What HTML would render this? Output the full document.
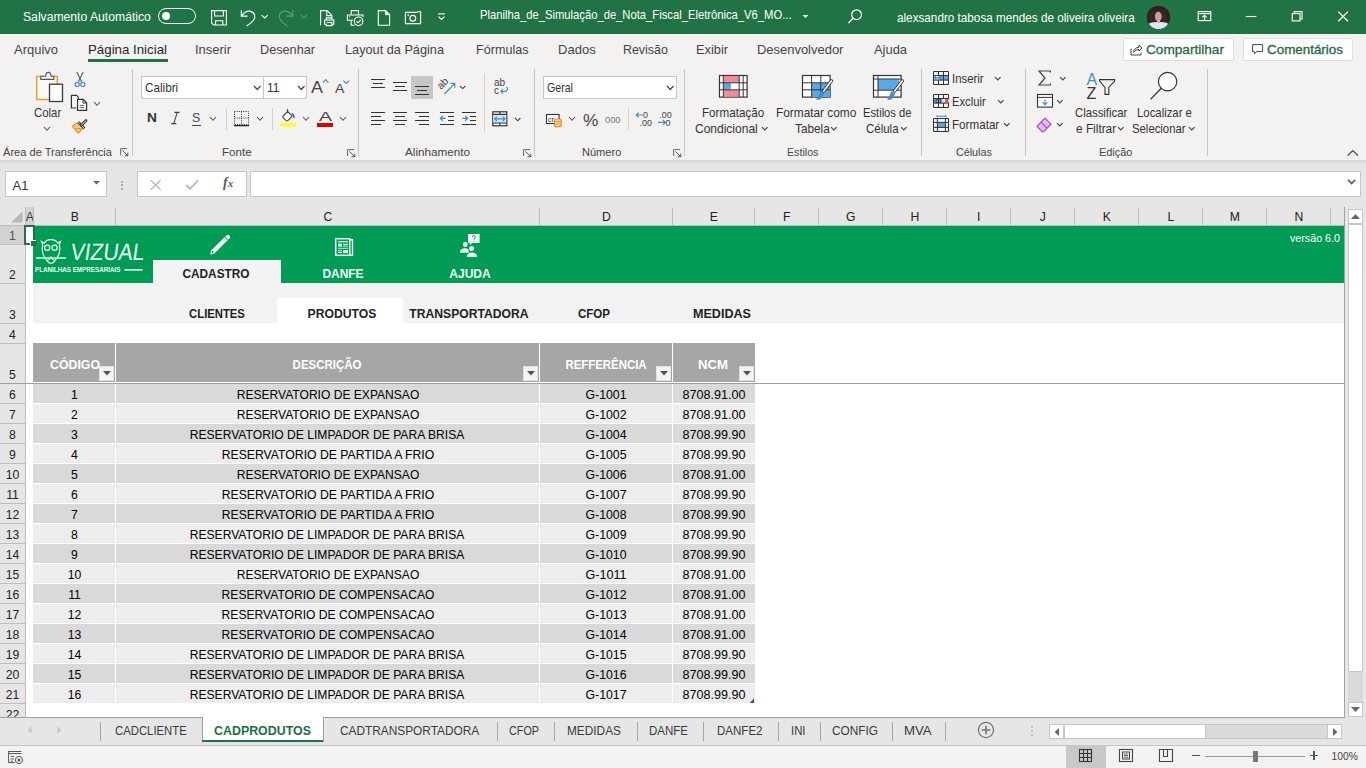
<!DOCTYPE html><html><head><meta charset="utf-8"><style>
*{box-sizing:border-box;margin:0;padding:0}
html,body{width:1366px;height:768px;overflow:hidden;background:#fff;font-family:"Liberation Sans", sans-serif;}
.ab{position:absolute}
.t{position:absolute;white-space:nowrap;line-height:1}
svg{position:absolute;overflow:visible}
</style></head><body>

<div class="ab" style="left:0px;top:0px;width:1366px;height:34px;background:#217346"></div>
<div class="t" style="left:23.00px;top:10.67px;font-size:12.2px;color:#fff;font-weight:400;transform:scaleX(0.9986);transform-origin:0 0;">Salvamento Automático</div>
<div class="ab" style="left:158px;top:8px;width:38px;height:16px;border:1.3px solid #fff;border-radius:8px"></div>
<div class="ab" style="left:162px;top:12px;width:8px;height:8px;background:#fff;border-radius:50%"></div>
<div class="t" style="left:480.30px;top:9.33px;font-size:12.6px;color:#fff;font-weight:400;transform:scaleX(0.8918);transform-origin:0 0;">Planilha_de_Simulação_de_Nota_Fiscal_Eletrônica_V6_MO...</div>
<div class="t" style="left:897.00px;top:11.67px;font-size:12.2px;color:#fff;font-weight:400;transform:scaleX(0.9614);transform-origin:0 0;">alexsandro tabosa mendes de oliveira oliveira</div>
<svg style="left:200px;top:0px;" width="40" height="34" viewBox="0 0 40 34"><path d="M11.6 10.6 H26.4 V25 H13.6 L11.6 23 Z" fill="none" stroke="#fff" stroke-width="1.1"/><path d="M14.6 10.6 V16 H23.4 V10.6" fill="none" stroke="#fff" stroke-width="1.1"/><path d="M15.6 25 V20.8 H22.8 V25" fill="none" stroke="#fff" stroke-width="1.1"/></svg>
<svg style="left:236px;top:0px;" width="40" height="34" viewBox="0 0 40 34"><path d="M5.3 10.3 V16.1 H11.5" fill="none" stroke="#fff" stroke-width="1.1"/><path d="M5.6 15.8 Q9.5 10.6 13.8 11.2 Q19.6 12.5 18.6 18.2 Q17.6 21.6 10.6 26" fill="none" stroke="#fff" stroke-width="1.2"/><path d="M25.6 15.2 L28.7 18 L31.8 15.2" fill="none" stroke="#fff" stroke-width="1.1"/></svg>
<svg style="left:276px;top:0px;" width="40" height="34" viewBox="0 0 40 34"><path d="M16.8 10.3 V16.1 H10.6" fill="none" stroke="#5f9e7c" stroke-width="1.1"/><path d="M16.5 15.8 Q12.6 10.6 8.3 11.2 Q2.5 12.5 3.5 18.2 Q4.5 21.6 11.5 26" fill="none" stroke="#5f9e7c" stroke-width="1.2"/><path d="M24.8 15.2 L27.9 18 L31 15.2" fill="none" stroke="#5f9e7c" stroke-width="1.1"/></svg>
<svg style="left:316px;top:0px;" width="24" height="34" viewBox="0 0 24 34"><path d="M4.6 25.2 V10.6 H11.2 L15.8 15.4 V17.6" fill="none" stroke="#fff" stroke-width="1.1"/><path d="M10.8 10.6 V15.6 H15.8" fill="none" stroke="#fff" stroke-width="1.1"/><path d="M10.3 17.9 H16 V20 H17.8 V24.3 H16 V25.6 H10.3 V24.3 H8.6 V20 H10.3 Z" fill="none" stroke="#fff" stroke-width="1.1"/><path d="M10.3 20 H16" fill="none" stroke="#fff" stroke-width="1.1"/><path d="M10.6 22.5 H15.8 V25.3" fill="none" stroke="#fff" stroke-width="1.1"/></svg>
<svg style="left:344px;top:0px;" width="24" height="34" viewBox="0 0 24 34"><path d="M7.2 14.8 V10.6 H14.5 V14.8" fill="none" stroke="#fff" stroke-width="1.1"/><path d="M9 20.3 H3.4 V15 H19 V17" fill="none" stroke="#fff" stroke-width="1.1"/><path d="M7.2 20.3 V25.3 H10.5" fill="none" stroke="#fff" stroke-width="1.1"/><circle cx="14.6" cy="21.3" r="4.3" fill="none" stroke="#fff" stroke-width="1.1"/><path d="M12.5 21.4 L14 22.8 L16.8 20" fill="none" stroke="#fff" stroke-width="1.1"/><rect x="4.9" y="16.3" width="1" height="1" fill="#fff"/></svg>
<svg style="left:374px;top:0px;" width="20" height="34" viewBox="0 0 20 34"><path d="M4.3 10.6 H11.6 L15.6 14.6 V25.2 H4.3 Z" fill="none" stroke="#fff" stroke-width="1.1"/><path d="M11.4 10.8 V14.8 H15.4" fill="#fff" stroke="#fff" stroke-width="0.6"/></svg>
<svg style="left:402px;top:0px;" width="24" height="34" viewBox="0 0 24 34"><path d="M3.4 12.4 H14.8 L15.6 11.8 H18.6 V23.6 H3.4 Z" fill="none" stroke="#fff" stroke-width="1.1"/><circle cx="10.8" cy="18.2" r="2.9" fill="none" stroke="#fff" stroke-width="1.2"/><rect x="5.5" y="14.3" width="1.4" height="1.4" fill="#fff"/></svg>
<svg style="left:434px;top:0px;" width="16" height="34" viewBox="0 0 16 34"><path d="M4 13.9 H11" stroke="#fff" stroke-width="1.1"/><path d="M4.5 16.6 L7.5 19.4 L10.5 16.6" fill="none" stroke="#fff" stroke-width="1.2"/></svg>
<svg style="left:800px;top:0px;" width="14" height="34" viewBox="0 0 14 34"><path d="M2.5 15 H8.5 L5.5 18Z" fill="#fff"/></svg>
<svg style="left:844px;top:0px;" width="22" height="34" viewBox="0 0 22 34"><circle cx="12.6" cy="14.7" r="4.9" fill="none" stroke="#fff" stroke-width="1.2"/><path d="M9.1 18.3 L4.4 23" fill="none" stroke="#fff" stroke-width="1.3"/></svg>
<div class="ab" style="left:1147px;top:6px;width:23px;height:23px;border-radius:50%;overflow:hidden;background:#2b2020"><svg width="23" height="23" style="left:0;top:0"><rect width="23" height="23" fill="#2e2222"/><path d="M3 10 Q5 3 11.5 3 Q18 3 20 10 V16 H3Z" fill="#3a2626"/><ellipse cx="11.3" cy="10.6" rx="3.4" ry="4.8" fill="#caa093"/><path d="M0 23 V19 Q3 16 9 16 H14 Q20 16 23 19 V23Z" fill="#e4e3ea"/><rect x="10" y="14" width="3" height="3" fill="#c9b6ae"/></svg></div>
<svg style="left:1194px;top:0px;" width="20" height="34" viewBox="0 0 20 34"><rect x="4.2" y="11.6" width="12.6" height="9" fill="none" stroke="#fff" stroke-width="1.1"/><path d="M4.2 13.6 H16.8" fill="none" stroke="#fff" stroke-width="1.1"/><path d="M8.3 17.3 L10.5 15.2 L12.7 17.3 M10.5 15.4 V20.4" fill="none" stroke="#fff" stroke-width="1.1"/></svg>
<svg style="left:1240px;top:0px;" width="20" height="34" viewBox="0 0 20 34"><path d="M5.7 16.5 H16.4" stroke="#fff" stroke-width="1.1"/></svg>
<svg style="left:1288px;top:0px;" width="20" height="34" viewBox="0 0 20 34"><rect x="4.2" y="13.6" width="7.8" height="7.3" fill="none" stroke="#fff" stroke-width="1.1"/><path d="M6.2 13.6 V11.6 H14 V19 H12" fill="none" stroke="#fff" stroke-width="1.1"/></svg>
<svg style="left:1334px;top:0px;" width="20" height="34" viewBox="0 0 20 34"><path d="M4.2 11.6 L14 21.2 M14 11.6 L4.2 21.2" fill="none" stroke="#fff" stroke-width="1.2"/></svg>
<div class="ab" style="left:0px;top:34px;width:1366px;height:126px;background:#f3f2f1"></div>
<div class="t" style="left:14.00px;top:43.00px;font-size:13px;color:#444;font-weight:400;transform:scaleX(0.9981);transform-origin:0 0;">Arquivo</div>
<div class="t" style="left:88.00px;top:43.00px;font-size:13px;color:#262626;font-weight:400;transform:scaleX(1.0217);transform-origin:0 0;">Página Inicial</div>
<div class="t" style="left:194.60px;top:43.00px;font-size:13px;color:#444;font-weight:400;transform:scaleX(0.9968);transform-origin:0 0;">Inserir</div>
<div class="t" style="left:260.00px;top:43.00px;font-size:13px;color:#444;font-weight:400;transform:scaleX(0.9757);transform-origin:0 0;">Desenhar</div>
<div class="t" style="left:345.00px;top:43.00px;font-size:13px;color:#444;font-weight:400;transform:scaleX(0.9782);transform-origin:0 0;">Layout da Página</div>
<div class="t" style="left:476.00px;top:43.00px;font-size:13px;color:#444;font-weight:400;transform:scaleX(0.9689);transform-origin:0 0;">Fórmulas</div>
<div class="t" style="left:557.80px;top:43.00px;font-size:13px;color:#444;font-weight:400;transform:scaleX(1.0031);transform-origin:0 0;">Dados</div>
<div class="t" style="left:622.80px;top:43.00px;font-size:13px;color:#444;font-weight:400;transform:scaleX(0.9538);transform-origin:0 0;">Revisão</div>
<div class="t" style="left:696.00px;top:43.00px;font-size:13px;color:#444;font-weight:400;transform:scaleX(0.9842);transform-origin:0 0;">Exibir</div>
<div class="t" style="left:757.00px;top:43.00px;font-size:13px;color:#444;font-weight:400;transform:scaleX(0.9964);transform-origin:0 0;">Desenvolvedor</div>
<div class="t" style="left:873.70px;top:43.00px;font-size:13px;color:#444;font-weight:400;transform:scaleX(0.9924);transform-origin:0 0;">Ajuda</div>
<div class="ab" style="left:88px;top:59px;width:80px;height:3px;background:#217346"></div>
<div class="ab" style="left:1123px;top:38px;width:111px;height:23px;background:#fff;border:1px solid #e1dfdd;border-radius:2px"></div>
<div class="ab" style="left:1243px;top:38px;width:110px;height:23px;background:#fff;border:1px solid #e1dfdd;border-radius:2px"></div>
<div class="t" style="left:1146.00px;top:42.66px;font-size:13.4px;color:#1d6b40;font-weight:400;transform:scaleX(1.0169);transform-origin:0 0;-webkit-text-stroke:0.3px #1d6b40;">Compartilhar</div>
<div class="t" style="left:1267.00px;top:42.66px;font-size:13.4px;color:#1d6b40;font-weight:400;transform:scaleX(1.0005);transform-origin:0 0;-webkit-text-stroke:0.3px #1d6b40;">Comentários</div>
<div class="ab" style="left:132px;top:69px;width:1px;height:87px;background:#c8c6c4"></div>
<div class="ab" style="left:358px;top:69px;width:1px;height:87px;background:#c8c6c4"></div>
<div class="ab" style="left:534px;top:69px;width:1px;height:87px;background:#c8c6c4"></div>
<div class="ab" style="left:684px;top:69px;width:1px;height:87px;background:#c8c6c4"></div>
<div class="ab" style="left:921px;top:69px;width:1px;height:87px;background:#c8c6c4"></div>
<div class="ab" style="left:1025px;top:69px;width:1px;height:87px;background:#c8c6c4"></div>
<div class="ab" style="left:1207px;top:69px;width:1px;height:87px;background:#c8c6c4"></div>
<div class="t" style="left:3.00px;top:146.71px;font-size:11.8px;color:#444;font-weight:400;transform:scaleX(0.9387);transform-origin:0 0;">Área de Transferência</div>
<div class="t" style="left:222.00px;top:146.71px;font-size:11.8px;color:#444;font-weight:400;transform:scaleX(0.9810);transform-origin:0 0;">Fonte</div>
<div class="t" style="left:405.00px;top:146.71px;font-size:11.8px;color:#444;font-weight:400;transform:scaleX(0.9909);transform-origin:0 0;">Alinhamento</div>
<div class="t" style="left:581.70px;top:146.71px;font-size:11.8px;color:#444;font-weight:400;transform:scaleX(0.9363);transform-origin:0 0;">Número</div>
<div class="t" style="left:786.60px;top:146.71px;font-size:11.8px;color:#444;font-weight:400;transform:scaleX(0.9036);transform-origin:0 0;">Estilos</div>
<div class="t" style="left:955.60px;top:146.71px;font-size:11.8px;color:#444;font-weight:400;transform:scaleX(0.9097);transform-origin:0 0;">Células</div>
<div class="t" style="left:1099.00px;top:146.71px;font-size:11.8px;color:#444;font-weight:400;transform:scaleX(0.9256);transform-origin:0 0;">Edição</div>
<svg style="left:30px;top:66px;" width="40" height="40" viewBox="0 0 40 40"><path d="M6.7 10.6 H27.3 V33.6 H6.7Z" fill="#fbfaf9" stroke="#e89d2c" stroke-width="1.5"/><path d="M10.8 13.4 V10.2 H15.6 Q15.8 6.4 18.3 6.4 Q20.8 6.4 21 10.2 H23.8 V13.4Z" fill="#fff" stroke="#555" stroke-width="1.1"/><rect x="19.5" y="18.2" width="13" height="17.3" fill="#fff" stroke="#3c3c3c" stroke-width="1.3"/></svg>
<div class="t" style="left:33.60px;top:106.87px;font-size:12.2px;color:#333;font-weight:400;transform:scaleX(0.9328);transform-origin:0 0;">Colar</div>
<svg style="left:42.8px;top:125.75px;" width="8" height="5.3" viewBox="0 0 8 5.3"><path d="M1 1 L4.0 4.3 L7 1" fill="none" stroke="#555" stroke-width="1.1"/></svg>
<svg style="left:70px;top:66px;" width="20" height="24" viewBox="0 0 20 24"><path d="M6.8 6 L11.6 15.8 M13.2 6 L8.4 15.8" stroke="#555" stroke-width="1.1"/><circle cx="7.2" cy="18.4" r="2.1" fill="none" stroke="#3f8fd0" stroke-width="1.2"/><circle cx="12.8" cy="18.4" r="2.1" fill="none" stroke="#3f8fd0" stroke-width="1.2"/></svg>
<svg style="left:68px;top:92px;" width="22" height="22" viewBox="0 0 22 22"><path d="M8.4 16 H3.4 V3.4 H8.6 L10.4 5.2 V6.6" fill="none" stroke="#333" stroke-width="1.2"/><path d="M9.6 7.4 H15.2 L18.6 10.8 V18.4 H9.6 Z" fill="#fff" stroke="#333" stroke-width="1.2"/><path d="M15 7.6 V11 H18.4" fill="none" stroke="#333" stroke-width="1"/><path d="M11.8 13.4 H16.2 M11.8 15.6 H16.2" stroke="#555" stroke-width="0.9"/></svg>
<svg style="left:92.6px;top:100.85px;" width="8" height="5.3" viewBox="0 0 8 5.3"><path d="M1 1 L4.0 4.3 L7 1" fill="none" stroke="#555" stroke-width="1.1"/></svg>
<svg style="left:66px;top:112px;" width="26" height="26" viewBox="0 0 26 26"><path d="M12.6 10.2 L6.2 14.2 L12.2 21.2 L18.2 15.2 Z" fill="#f7c985" stroke="#e8922a" stroke-width="1.1"/><path d="M8.6 16.4 L15.6 16.6" stroke="#e8922a" stroke-width="1"/><path d="M12.2 10.2 L18.4 16.4" stroke="#333" stroke-width="2.6"/><path d="M12.2 10.2 L18.4 16.4" stroke="#fff" stroke-width="0.8"/><path d="M15.4 13.2 L20 8.6" stroke="#333" stroke-width="2.8" stroke-linecap="round"/><path d="M15.6 13 L19.9 8.7" stroke="#fff" stroke-width="0.9" stroke-linecap="round"/></svg>
<svg style="left:120px;top:147.5px;" width="9" height="9" viewBox="0 0 9 9"><path d="M0.6 7 V0.6 H7" fill="none" stroke="#666" stroke-width="1"/><path d="M2.4 2.4 L7.8 7.8 M4.6 7.8 H7.8 V4.6" fill="none" stroke="#555" stroke-width="1"/></svg>
<svg style="left:346.5px;top:148.5px;" width="9" height="9" viewBox="0 0 9 9"><path d="M0.6 7 V0.6 H7" fill="none" stroke="#666" stroke-width="1"/><path d="M2.4 2.4 L7.8 7.8 M4.6 7.8 H7.8 V4.6" fill="none" stroke="#555" stroke-width="1"/></svg>
<svg style="left:522.5px;top:148.5px;" width="9" height="9" viewBox="0 0 9 9"><path d="M0.6 7 V0.6 H7" fill="none" stroke="#666" stroke-width="1"/><path d="M2.4 2.4 L7.8 7.8 M4.6 7.8 H7.8 V4.6" fill="none" stroke="#555" stroke-width="1"/></svg>
<svg style="left:672.5px;top:148.5px;" width="9" height="9" viewBox="0 0 9 9"><path d="M0.6 7 V0.6 H7" fill="none" stroke="#666" stroke-width="1"/><path d="M2.4 2.4 L7.8 7.8 M4.6 7.8 H7.8 V4.6" fill="none" stroke="#555" stroke-width="1"/></svg>
<div class="ab" style="left:141px;top:76px;width:123px;height:23px;background:#fff;border:1px solid #c8c6c4"></div>
<div class="ab" style="left:264px;top:76px;width:43px;height:23px;background:#fff;border:1px solid #c8c6c4;border-left:none"></div>
<div class="t" style="left:144.80px;top:82.07px;font-size:12.2px;color:#333;font-weight:400;transform:scaleX(0.9602);transform-origin:0 0;">Calibri</div>
<div class="t" style="left:266.50px;top:82.07px;font-size:12.2px;color:#333;font-weight:400;transform:scaleX(0.9871);transform-origin:0 0;">11</div>
<svg style="left:253.25px;top:85.25px;" width="8.5" height="5.5" viewBox="0 0 8.5 5.5"><path d="M1 1 L4.25 4.5 L7.5 1" fill="none" stroke="#444" stroke-width="1.2"/></svg>
<svg style="left:296.75px;top:85.25px;" width="8.5" height="5.5" viewBox="0 0 8.5 5.5"><path d="M1 1 L4.25 4.5 L7.5 1" fill="none" stroke="#444" stroke-width="1.2"/></svg>
<div class="t" style="left:311.00px;top:79.03px;font-size:16.5px;color:#444;font-weight:400;transform:scaleX(1.0904);transform-origin:0 0;">A</div>
<svg style="left:322px;top:78px;" width="8" height="6" viewBox="0 0 8 6"><path d="M1 4.6 L3.7 1.6 L6.4 4.6" fill="none" stroke="#3f8fd0" stroke-width="1.2"/></svg>
<div class="t" style="left:334.60px;top:81.57px;font-size:13.5px;color:#444;font-weight:400;transform:scaleX(1.0439);transform-origin:0 0;">A</div>
<svg style="left:341.5px;top:79px;" width="9" height="6" viewBox="0 0 9 6"><path d="M1.4 1.6 L4.2 4.4 L7 1.6" fill="none" stroke="#3f8fd0" stroke-width="1.3"/></svg>
<div class="t" style="left:146.50px;top:111.49px;font-size:13.6px;color:#333;font-weight:700;transform:scaleX(1.0082);transform-origin:0 0;">N</div>
<svg style="left:168px;top:110px;" width="14" height="16" viewBox="0 0 14 16"><path d="M6.4 2.4 H11.6 M3.2 13.6 H8.4 M9.2 2.4 L5.8 13.6" fill="none" stroke="#444" stroke-width="1.1"/></svg>
<div class="t" style="left:191.80px;top:111.49px;font-size:13.6px;color:#444;font-weight:400;transform:scaleX(0.9040);transform-origin:0 0;">S</div>
<div class="ab" style="left:191.5px;top:125px;width:9px;height:1px;background:#444"></div>
<svg style="left:209.3px;top:116.14999999999999px;" width="8" height="5.3" viewBox="0 0 8 5.3"><path d="M1 1 L4.0 4.3 L7 1" fill="none" stroke="#555" stroke-width="1.1"/></svg>
<div class="ab" style="left:226px;top:108px;width:1px;height:22px;background:#d2d0ce"></div>
<svg style="left:232px;top:109px;" width="20" height="20" viewBox="0 0 20 20"><path d="M2.5 2.5 H16.5 V15.5 H2.5 Z M9.5 2.5 V15.5 M2.5 9 H16.5" fill="none" stroke="#333" stroke-width="1" stroke-dasharray="1 1.2"/><path d="M2 16.6 H17" stroke="#222" stroke-width="1.3"/></svg>
<svg style="left:255.60000000000002px;top:116.14999999999999px;" width="8" height="5.3" viewBox="0 0 8 5.3"><path d="M1 1 L4.0 4.3 L7 1" fill="none" stroke="#555" stroke-width="1.1"/></svg>
<div class="ab" style="left:272px;top:108px;width:1px;height:22px;background:#d2d0ce"></div>
<svg style="left:278px;top:107px;" width="20" height="20" viewBox="0 0 20 20"><path d="M5.2 9 L9.6 4.4 L14.2 9.2 L10 13.4 Q9 14.2 8 13.4 L5.2 10.6 Q4.4 9.8 5.2 9Z" fill="#fff" stroke="#444" stroke-width="1.1"/><path d="M9.6 4.4 L9.6 2" stroke="#444" stroke-width="1.1"/><path d="M13.6 6.8 Q16.4 7.4 16 11.2" fill="none" stroke="#2b6fb5" stroke-width="1.4"/><rect x="2" y="16" width="16" height="3.6" fill="#ffff00" opacity="0.85"/></svg>
<svg style="left:301.6px;top:116.14999999999999px;" width="8" height="5.3" viewBox="0 0 8 5.3"><path d="M1 1 L4.0 4.3 L7 1" fill="none" stroke="#555" stroke-width="1.1"/></svg>
<div class="t" style="left:318.50px;top:109.99px;font-size:13.6px;color:#444;font-weight:400;transform:scaleX(1.4331);transform-origin:0 0;">A</div>
<div class="ab" style="left:317px;top:123px;width:16px;height:3.6px;background:#e00000"></div>
<svg style="left:339.0px;top:116.14999999999999px;" width="8" height="5.3" viewBox="0 0 8 5.3"><path d="M1 1 L4.0 4.3 L7 1" fill="none" stroke="#555" stroke-width="1.1"/></svg>
<div class="ab" style="left:411px;top:76px;width:22px;height:23px;background:#c8c6c4"></div>
<div class="ab" style="left:371px;top:79px;width:14px;height:1px;background:#333"></div>
<div class="ab" style="left:373px;top:83px;width:10px;height:1px;background:#333"></div>
<div class="ab" style="left:371px;top:87px;width:14px;height:1px;background:#333"></div>
<div class="ab" style="left:393px;top:82px;width:14px;height:1px;background:#333"></div>
<div class="ab" style="left:395px;top:86px;width:10px;height:1px;background:#333"></div>
<div class="ab" style="left:393px;top:90px;width:14px;height:1px;background:#333"></div>
<div class="ab" style="left:415px;top:86px;width:14px;height:1px;background:#333"></div>
<div class="ab" style="left:417px;top:90px;width:10px;height:1px;background:#333"></div>
<div class="ab" style="left:415px;top:94px;width:14px;height:1px;background:#333"></div>
<div class="ab" style="left:371px;top:112px;width:14px;height:1px;background:#333"></div>
<div class="ab" style="left:371px;top:116px;width:10px;height:1px;background:#333"></div>
<div class="ab" style="left:371px;top:120px;width:14px;height:1px;background:#333"></div>
<div class="ab" style="left:371px;top:124px;width:10px;height:1px;background:#333"></div>
<div class="ab" style="left:393px;top:112px;width:14px;height:1px;background:#333"></div>
<div class="ab" style="left:395px;top:116px;width:10px;height:1px;background:#333"></div>
<div class="ab" style="left:393px;top:120px;width:14px;height:1px;background:#333"></div>
<div class="ab" style="left:395px;top:124px;width:10px;height:1px;background:#333"></div>
<div class="ab" style="left:415px;top:112px;width:14px;height:1px;background:#333"></div>
<div class="ab" style="left:419px;top:116px;width:10px;height:1px;background:#333"></div>
<div class="ab" style="left:415px;top:120px;width:14px;height:1px;background:#333"></div>
<div class="ab" style="left:419px;top:124px;width:10px;height:1px;background:#333"></div>
<div class="ab" style="left:440px;top:112px;width:14px;height:1px;background:#333"></div>
<div class="ab" style="left:448px;top:116px;width:6px;height:1px;background:#333"></div>
<div class="ab" style="left:448px;top:120px;width:6px;height:1px;background:#333"></div>
<div class="ab" style="left:440px;top:124px;width:14px;height:1px;background:#333"></div>
<svg style="left:438px;top:114px;" width="10" height="10" viewBox="0 0 10 10"><path d="M2.6 4.4 H7.6 M4.8 2 L2.4 4.4 L4.8 6.8" fill="none" stroke="#3f8fd0" stroke-width="1.3"/></svg>
<div class="ab" style="left:462px;top:112px;width:14px;height:1px;background:#333"></div>
<div class="ab" style="left:470px;top:116px;width:6px;height:1px;background:#333"></div>
<div class="ab" style="left:470px;top:120px;width:6px;height:1px;background:#333"></div>
<div class="ab" style="left:462px;top:124px;width:14px;height:1px;background:#333"></div>
<svg style="left:460px;top:114px;" width="10" height="10" viewBox="0 0 10 10"><path d="M2.4 4.4 H7.6 M5.2 2 L7.6 4.4 L5.2 6.8" fill="none" stroke="#3f8fd0" stroke-width="1.3"/></svg>
<svg style="left:436px;top:72px;" width="24" height="26" viewBox="0 0 24 26"><text x="5" y="18" font-size="10.4" font-family="Liberation Sans" fill="#444" transform="rotate(-45 5 18)">ab</text><path d="M8.4 22 L18.6 11.6 M14.4 11.4 H18.8 V15.8" fill="none" stroke="#3f8fd0" stroke-width="1.2"/></svg>
<svg style="left:459.1px;top:85.0px;" width="7.4" height="4.6" viewBox="0 0 7.4 4.6"><path d="M1 1 L3.7 3.6 L6.4 1" fill="none" stroke="#444" stroke-width="1.1"/></svg>
<div class="ab" style="left:484px;top:74px;width:1px;height:58px;background:#d2d0ce"></div>
<svg style="left:492px;top:74px;" width="22" height="24" viewBox="0 0 22 24"><text x="2" y="12.4" font-size="10" font-family="Liberation Sans" fill="#444">ab</text><text x="2" y="19.8" font-size="10" font-family="Liberation Sans" fill="#444">c</text><path d="M14.6 13 Q17 15.6 13.6 17.4 H9 M11 15.2 L8.8 17.4 L11 19.6" fill="none" stroke="#3f8fd0" stroke-width="1.2"/></svg>
<svg style="left:490px;top:109px;" width="20" height="20" viewBox="0 0 20 20"><rect x="2.8" y="2.8" width="14" height="14" fill="#fff" stroke="#333" stroke-width="1.2"/><rect x="3.4" y="5.6" width="12.8" height="8.4" fill="#d5e8f7"/><path d="M2.8 5.4 H16.8 M2.8 14 H16.8 M9.8 2.8 V5.4 M9.8 14 V16.8" stroke="#333" stroke-width="1.1"/><path d="M4.6 9.8 H15 M6.8 7.6 L4.6 9.8 L6.8 12 M12.8 7.6 L15 9.8 L12.8 12" fill="none" stroke="#3f8fd0" stroke-width="1.2"/></svg>
<svg style="left:513.9px;top:117.1px;" width="7.4" height="4.8" viewBox="0 0 7.4 4.8"><path d="M1 1 L3.7 3.8 L6.4 1" fill="none" stroke="#444" stroke-width="1.1"/></svg>
<div class="ab" style="left:543px;top:76px;width:134px;height:23px;background:#fff;border:1px solid #c8c6c4"></div>
<div class="t" style="left:546.70px;top:82.07px;font-size:12.2px;color:#333;font-weight:400;transform:scaleX(0.8716);transform-origin:0 0;">Geral</div>
<svg style="left:666.35px;top:85.25px;" width="8.5" height="5.5" viewBox="0 0 8.5 5.5"><path d="M1 1 L4.25 4.5 L7.5 1" fill="none" stroke="#444" stroke-width="1.2"/></svg>
<svg style="left:544px;top:111px;" width="22" height="18" viewBox="0 0 22 18"><rect x="2.5" y="3.5" width="12.6" height="9" fill="#fff" stroke="#333" stroke-width="1.1"/><text x="3.8" y="11" font-size="7.5" font-family="Liberation Sans" fill="#333">cr</text><rect x="10.6" y="8" width="6.6" height="7.6" rx="1" fill="#f7d9a8" stroke="#e48a1d" stroke-width="1.1"/><path d="M10.8 10.6 H17.2 M10.8 13 H17.2" stroke="#e48a1d" stroke-width="0.9"/></svg>
<svg style="left:567.7px;top:116.14999999999999px;" width="8" height="5.3" viewBox="0 0 8 5.3"><path d="M1 1 L4.0 4.3 L7 1" fill="none" stroke="#555" stroke-width="1.1"/></svg>
<div class="t" style="left:583.00px;top:111.61px;font-size:17px;color:#444;font-weight:400;transform:scaleX(1.0190);transform-origin:0 0;">%</div>
<div class="t" style="left:605.00px;top:115.04px;font-size:9.4px;color:#777;font-weight:400;transform:scaleX(0.9886);transform-origin:0 0;">000</div>
<div class="ab" style="left:628px;top:108px;width:1px;height:22px;background:#d2d0ce"></div>
<svg style="left:634px;top:110px;" width="20" height="18" viewBox="0 0 20 18"><text x="9" y="8" font-size="9" font-family="Liberation Sans" fill="#444">0</text><text x="5.6" y="15.8" font-size="9" font-family="Liberation Sans" fill="#444">.00</text><path d="M2.2 5 H9 M4.6 2.6 L2.2 5 L4.6 7.4" fill="none" stroke="#3f8fd0" stroke-width="1.2"/></svg>
<svg style="left:656px;top:110px;" width="20" height="18" viewBox="0 0 20 18"><text x="3.2" y="8" font-size="9" font-family="Liberation Sans" fill="#444">.00</text><text x="9.6" y="15.8" font-size="9" font-family="Liberation Sans" fill="#444">0</text><path d="M2 12.4 H9.4 M7 10 L9.4 12.4 L7 14.8" fill="none" stroke="#3f8fd0" stroke-width="1.2"/></svg>
<svg style="left:716px;top:72px;" width="34" height="28" viewBox="0 0 34 28"><rect x="3.5" y="3.5" width="27.6" height="21.6" fill="#fff" stroke="#333" stroke-width="1.2"/><rect x="7.4" y="4" width="15.6" height="6.6" fill="#f28b94"/><rect x="7.4" y="18" width="15.6" height="6.6" fill="#f28b94"/><rect x="7.4" y="11" width="7.4" height="6.6" fill="#5aa8e6"/><path d="M3.5 10.8 H31.1 M3.5 17.8 H31.1 M7.3 3.5 V25.1 M23.2 3.5 V25.1 M27.2 3.5 V25.1" stroke="#333" stroke-width="1"/></svg>
<div class="t" style="left:701.50px;top:107.17px;font-size:12.2px;color:#333;font-weight:400;transform:scaleX(0.9556);transform-origin:0 0;">Formatação</div>
<div class="t" style="left:695.40px;top:123.07px;font-size:12.2px;color:#333;font-weight:400;transform:scaleX(0.9850);transform-origin:0 0;">Condicional</div>
<svg style="left:761.2px;top:125.9px;" width="7.6" height="5" viewBox="0 0 7.6 5"><path d="M1 1 L3.8 4 L6.6 1" fill="none" stroke="#444" stroke-width="1.1"/></svg>
<svg style="left:800px;top:72px;" width="36" height="32" viewBox="0 0 36 32"><rect x="2.5" y="3.5" width="27.6" height="21.6" fill="#fff" stroke="#333" stroke-width="1.2"/><rect x="12" y="11" width="18" height="14" fill="#5aa8e6"/><path d="M2.5 10.8 H30.1 M2.5 17.8 H30.1 M11.6 3.5 V25.1 M20.8 3.5 V25.1" stroke="#333" stroke-width="1"/><path d="M31.4 7.6 Q33.2 7.6 32.6 9.4 L24 20.6 L22.2 19 L30.2 8.2Z" fill="#fff" stroke="#333" stroke-width="1"/><path d="M22 19.2 Q19.4 19.4 19 22.6 Q18.6 26 16 27.6 Q22 28.8 24 22 Z" fill="#3f8fd0"/></svg>
<div class="t" style="left:775.60px;top:107.17px;font-size:12.2px;color:#333;font-weight:400;transform:scaleX(0.9721);transform-origin:0 0;">Formatar como</div>
<div class="t" style="left:794.80px;top:123.07px;font-size:12.2px;color:#333;font-weight:400;transform:scaleX(0.9676);transform-origin:0 0;">Tabela</div>
<svg style="left:830.2px;top:125.9px;" width="7.6" height="5" viewBox="0 0 7.6 5"><path d="M1 1 L3.8 4 L6.6 1" fill="none" stroke="#444" stroke-width="1.1"/></svg>
<svg style="left:871px;top:72px;" width="36" height="32" viewBox="0 0 36 32"><rect x="2.5" y="3.5" width="27.6" height="21.6" fill="#fff" stroke="#333" stroke-width="1.2"/><rect x="7" y="7" width="21" height="11" fill="#5aa8e6"/><path d="M2.5 7 H30.1 M2.5 18.2 H30.1 M7 3.5 V25.1" stroke="#333" stroke-width="1"/><path d="M31.4 7.6 Q33.2 7.6 32.6 9.4 L24 20.6 L22.2 19 L30.2 8.2Z" fill="#fff" stroke="#333" stroke-width="1"/><path d="M22 19.2 Q19.4 19.4 19 22.6 Q18.6 26 16 27.6 Q22 28.8 24 22 Z" fill="#3f8fd0"/></svg>
<div class="t" style="left:862.50px;top:107.17px;font-size:12.2px;color:#333;font-weight:400;transform:scaleX(0.9170);transform-origin:0 0;">Estilos de</div>
<div class="t" style="left:866.00px;top:123.07px;font-size:12.2px;color:#333;font-weight:400;transform:scaleX(0.9422);transform-origin:0 0;">Célula</div>
<svg style="left:899.8000000000001px;top:125.9px;" width="7.6" height="5" viewBox="0 0 7.6 5"><path d="M1 1 L3.8 4 L6.6 1" fill="none" stroke="#444" stroke-width="1.1"/></svg>
<svg style="left:932px;top:70px;" width="20" height="20" viewBox="0 0 20 20"><rect x="6.5" y="5.5" width="10" height="4.6" fill="#5aa8e6"/><path d="M1.5 1.5 H16.5 V14.5 H1.5 Z M1.5 5.5 H16.5 M1.5 10.1 H16.5 M6.5 1.5 V5.5 M6.5 10.1 V14.5 M11.5 1.5 V14.5" fill="none" stroke="#333" stroke-width="1"/><path d="M2.2 7.8 H10 M4.6 5.4 L2.2 7.8 L4.6 10.2" fill="none" stroke="#3f8fd0" stroke-width="1.2"/></svg>
<svg style="left:932px;top:93px;" width="20" height="20" viewBox="0 0 20 20"><rect x="1.5" y="5.5" width="9" height="4.6" fill="#5aa8e6"/><path d="M16.5 5.5 V1.5 H1.5 V14.5 H16.5 V10.1 M1.5 5.5 H16.5 M1.5 10.1 H16.5 M6.5 1.5 V14.5 M11.5 1.5 V5.5 M11.5 10.1 V14.5" fill="none" stroke="#333" stroke-width="1"/><path d="M4 6.2 V9.4 H8.6 V6.2 Z" fill="none" stroke="#333" stroke-width="0.8"/><path d="M12.8 5.6 L16.8 9.8 M16.8 5.6 L12.8 9.8" stroke="#e02020" stroke-width="1.1"/></svg>
<svg style="left:932px;top:115px;" width="20" height="20" viewBox="0 0 20 20"><rect x="5.4" y="7.4" width="8" height="5" fill="#5aa8e6"/><path d="M1.5 3.5 H16.5 V16.5 H1.5 Z M1.5 7.4 H16.5 M1.5 12.4 H16.5 M5.4 3.5 V16.5 M13.4 3.5 V16.5" fill="none" stroke="#333" stroke-width="1"/><path d="M5 1.2 H14 M5 0.2 V2.2 M14 0.2 V2.2" fill="none" stroke="#3f8fd0" stroke-width="1"/></svg>
<div class="t" style="left:952.30px;top:73.07px;font-size:12.2px;color:#333;font-weight:400;transform:scaleX(0.9353);transform-origin:0 0;">Inserir</div>
<div class="t" style="left:952.30px;top:96.17px;font-size:12.2px;color:#333;font-weight:400;transform:scaleX(0.9205);transform-origin:0 0;">Excluir</div>
<div class="t" style="left:952.30px;top:118.97px;font-size:12.2px;color:#333;font-weight:400;transform:scaleX(0.9559);transform-origin:0 0;">Formatar</div>
<svg style="left:993.6px;top:76.3px;" width="7.6" height="5" viewBox="0 0 7.6 5"><path d="M1 1 L3.8 4 L6.6 1" fill="none" stroke="#444" stroke-width="1.1"/></svg>
<svg style="left:996.9000000000001px;top:99.1px;" width="7.6" height="5" viewBox="0 0 7.6 5"><path d="M1 1 L3.8 4 L6.6 1" fill="none" stroke="#444" stroke-width="1.1"/></svg>
<svg style="left:1003.0px;top:121.9px;" width="7.6" height="5" viewBox="0 0 7.6 5"><path d="M1 1 L3.8 4 L6.6 1" fill="none" stroke="#444" stroke-width="1.1"/></svg>
<svg style="left:1036px;top:68px;" width="18" height="20" viewBox="0 0 18 20"><path d="M14.4 4.4 V3 H3 L9 10 L3 17 H14.4 V15.6" fill="none" stroke="#444" stroke-width="1.2"/></svg>
<svg style="left:1058.8px;top:76.3px;" width="7.6" height="5" viewBox="0 0 7.6 5"><path d="M1 1 L3.8 4 L6.6 1" fill="none" stroke="#444" stroke-width="1.1"/></svg>
<svg style="left:1035px;top:92px;" width="20" height="18" viewBox="0 0 20 18"><rect x="2.5" y="2.5" width="15" height="12.6" fill="#fff" stroke="#333" stroke-width="1.1"/><path d="M2.5 5.4 H17.5" stroke="#333" stroke-width="1"/><path d="M10 7.4 V12.6 M7.6 10.4 L10 12.8 L12.4 10.4" fill="none" stroke="#3f8fd0" stroke-width="1.2"/></svg>
<svg style="left:1056.2px;top:98.5px;" width="7.6" height="5" viewBox="0 0 7.6 5"><path d="M1 1 L3.8 4 L6.6 1" fill="none" stroke="#444" stroke-width="1.1"/></svg>
<svg style="left:1035px;top:115px;" width="20" height="18" viewBox="0 0 20 18"><path d="M2.6 10.6 L10 3.2 L16 9.2 L8.6 16.6 Q7.8 17.2 7 16.6 L2.6 12.2 Q2 11.4 2.6 10.6Z" fill="#e3b8ef" stroke="#a64ac9" stroke-width="1.2"/><path d="M6 7.2 L12 13.2" stroke="#a64ac9" stroke-width="1.2"/></svg>
<svg style="left:1056.2px;top:121.5px;" width="7.6" height="5" viewBox="0 0 7.6 5"><path d="M1 1 L3.8 4 L6.6 1" fill="none" stroke="#444" stroke-width="1.1"/></svg>
<svg style="left:1084px;top:70px;" width="36" height="32" viewBox="0 0 36 32"><text x="2.6" y="15.2" font-size="16" font-family="Liberation Sans" fill="#3f8fd0">A</text><text x="2.6" y="29" font-size="16" font-family="Liberation Sans" fill="#333">Z</text><path d="M15.6 9.6 H30.6 V11 L24.8 17.4 V24.4 H21 V17.4 L15.6 11 Z" fill="none" stroke="#333" stroke-width="1.1"/></svg>
<div class="t" style="left:1074.70px;top:107.17px;font-size:12.2px;color:#333;font-weight:400;transform:scaleX(0.9295);transform-origin:0 0;">Classificar</div>
<div class="t" style="left:1076.40px;top:123.07px;font-size:12.2px;color:#333;font-weight:400;transform:scaleX(0.9723);transform-origin:0 0;">e Filtrar</div>
<svg style="left:1117.2px;top:125.9px;" width="7.6" height="5" viewBox="0 0 7.6 5"><path d="M1 1 L3.8 4 L6.6 1" fill="none" stroke="#444" stroke-width="1.1"/></svg>
<svg style="left:1148px;top:70px;" width="34" height="32" viewBox="0 0 34 32"><circle cx="19.6" cy="11.6" r="9.2" fill="#fff" stroke="#333" stroke-width="1.2"/><path d="M13.2 18.2 L2.6 29.4" stroke="#333" stroke-width="1.3"/></svg>
<div class="t" style="left:1137.00px;top:107.17px;font-size:12.2px;color:#333;font-weight:400;transform:scaleX(0.9322);transform-origin:0 0;">Localizar e</div>
<div class="t" style="left:1132.00px;top:123.07px;font-size:12.2px;color:#333;font-weight:400;transform:scaleX(0.9298);transform-origin:0 0;">Selecionar</div>
<svg style="left:1188.2px;top:125.9px;" width="7.6" height="5" viewBox="0 0 7.6 5"><path d="M1 1 L3.8 4 L6.6 1" fill="none" stroke="#444" stroke-width="1.1"/></svg>
<svg style="left:1346px;top:148px;" width="14" height="10" viewBox="0 0 14 10"><path d="M1.6 7.6 L6.8 2.6 L12 7.6" fill="none" stroke="#444" stroke-width="1.2"/></svg>
<svg style="left:1128px;top:41px;" width="16" height="16" viewBox="0 0 16 16"><path d="M3 7.6 V14 H13 V11.6" fill="none" stroke="#444" stroke-width="1"/><path d="M5.6 11.4 Q6 6.6 11 6.4 V4 L14 7 L11 10 V8.4 Q7.6 8.4 5.6 11.4Z" fill="none" stroke="#444" stroke-width="1"/></svg>
<svg style="left:1250px;top:41px;" width="16" height="16" viewBox="0 0 16 16"><path d="M2.6 3.6 H12.6 V10.6 H6.8 L4.4 12.8 V10.6 H2.6Z" fill="none" stroke="#444" stroke-width="1"/></svg>
<div class="ab" style="left:0px;top:160px;width:1366px;height:47px;background:#e6e6e6"></div>
<div class="ab" style="left:0px;top:160px;width:1366px;height:5px;background:linear-gradient(#d6d6d6,#e6e6e6)"></div>
<div class="ab" style="left:5px;top:171px;width:102px;height:26px;background:#fff;border:1px solid #c6c6c6"></div>
<div class="t" style="left:12.50px;top:179.00px;font-size:13px;color:#333;font-weight:400;">A1</div>
<div class="ab" style="left:137px;top:171px;width:110px;height:26px;background:#fff;border:1px solid #c6c6c6"></div>
<div class="ab" style="left:250px;top:171px;width:1111px;height:26px;background:#fff;border:1px solid #c6c6c6"></div>
<svg style="left:92px;top:180px;" width="10" height="6" viewBox="0 0 10 6"><path d="M1 1 H8 L4.5 4.6Z" fill="#666"/></svg>
<div class="ab" style="left:121px;top:180.5px;width:2px;height:2px;background:#9a9a9a;border-radius:1px"></div>
<div class="ab" style="left:121px;top:184px;width:2px;height:2px;background:#9a9a9a;border-radius:1px"></div>
<div class="ab" style="left:121px;top:187.5px;width:2px;height:2px;background:#9a9a9a;border-radius:1px"></div>
<svg style="left:148px;top:178px;" width="16" height="14" viewBox="0 0 16 14"><path d="M2.6 2.2 L12.6 11.8 M12.6 2.2 L2.6 11.8" stroke="#b4b4b4" stroke-width="1.2"/></svg>
<svg style="left:184px;top:178px;" width="16" height="14" viewBox="0 0 16 14"><path d="M2 7 L6 10.8 L14.2 2.4" fill="none" stroke="#bdbdbd" stroke-width="2"/></svg>
<div class="t" style="left:223px;top:175.5px;font-size:14px;font-family:'Liberation Serif';font-style:italic;font-weight:700;color:#5a5a5a">f<span style="font-size:11px;position:relative;left:0px">x</span></div>
<svg style="left:1346px;top:178px;" width="12" height="8" viewBox="0 0 12 8"><path d="M2 1.8 L5.6 5.6 L9.2 1.8" fill="none" stroke="#555" stroke-width="1.6"/></svg>
<div class="ab" style="left:0px;top:207px;width:1345px;height:19px;background:#e6e6e6"></div>
<div class="ab" style="left:25px;top:207px;width:9px;height:19px;background:#d2d2d2"></div>
<div class="t" style="left:-470.2px;width:1000px;text-align:center;top:210.67px;font-size:12.2px;color:#3b3b3b;font-weight:400;">A</div>
<div class="ab" style="left:33px;top:208px;width:1px;height:18px;background:#bdbdbd"></div>
<div class="t" style="left:-425.2px;width:1000px;text-align:center;top:210.67px;font-size:12.2px;color:#222;font-weight:400;">B</div>
<div class="ab" style="left:115px;top:208px;width:1px;height:18px;background:#bdbdbd"></div>
<div class="t" style="left:-172.2px;width:1000px;text-align:center;top:210.67px;font-size:12.2px;color:#222;font-weight:400;">C</div>
<div class="ab" style="left:539px;top:208px;width:1px;height:18px;background:#bdbdbd"></div>
<div class="t" style="left:106.29999999999995px;width:1000px;text-align:center;top:210.67px;font-size:12.2px;color:#222;font-weight:400;">D</div>
<div class="ab" style="left:672px;top:208px;width:1px;height:18px;background:#bdbdbd"></div>
<div class="t" style="left:213.79999999999995px;width:1000px;text-align:center;top:210.67px;font-size:12.2px;color:#222;font-weight:400;">E</div>
<div class="ab" style="left:754px;top:208px;width:1px;height:18px;background:#bdbdbd"></div>
<div class="t" style="left:286.79999999999995px;width:1000px;text-align:center;top:210.67px;font-size:12.2px;color:#222;font-weight:400;">F</div>
<div class="ab" style="left:818px;top:208px;width:1px;height:18px;background:#bdbdbd"></div>
<div class="t" style="left:350.79999999999995px;width:1000px;text-align:center;top:210.67px;font-size:12.2px;color:#222;font-weight:400;">G</div>
<div class="ab" style="left:882px;top:208px;width:1px;height:18px;background:#bdbdbd"></div>
<div class="t" style="left:414.79999999999995px;width:1000px;text-align:center;top:210.67px;font-size:12.2px;color:#222;font-weight:400;">H</div>
<div class="ab" style="left:946px;top:208px;width:1px;height:18px;background:#bdbdbd"></div>
<div class="t" style="left:478.79999999999995px;width:1000px;text-align:center;top:210.67px;font-size:12.2px;color:#222;font-weight:400;">I</div>
<div class="ab" style="left:1010px;top:208px;width:1px;height:18px;background:#bdbdbd"></div>
<div class="t" style="left:542.8px;width:1000px;text-align:center;top:210.67px;font-size:12.2px;color:#222;font-weight:400;">J</div>
<div class="ab" style="left:1074px;top:208px;width:1px;height:18px;background:#bdbdbd"></div>
<div class="t" style="left:606.8px;width:1000px;text-align:center;top:210.67px;font-size:12.2px;color:#222;font-weight:400;">K</div>
<div class="ab" style="left:1138px;top:208px;width:1px;height:18px;background:#bdbdbd"></div>
<div class="t" style="left:670.8px;width:1000px;text-align:center;top:210.67px;font-size:12.2px;color:#222;font-weight:400;">L</div>
<div class="ab" style="left:1202px;top:208px;width:1px;height:18px;background:#bdbdbd"></div>
<div class="t" style="left:734.8px;width:1000px;text-align:center;top:210.67px;font-size:12.2px;color:#222;font-weight:400;">M</div>
<div class="ab" style="left:1266px;top:208px;width:1px;height:18px;background:#bdbdbd"></div>
<div class="t" style="left:798.8px;width:1000px;text-align:center;top:210.67px;font-size:12.2px;color:#222;font-weight:400;">N</div>
<div class="ab" style="left:1330px;top:208px;width:1px;height:18px;background:#bdbdbd"></div>
<div class="ab" style="left:0px;top:225px;width:1345px;height:1px;background:#bdbdbd"></div>
<svg style="left:10px;top:210px;" width="14" height="14" viewBox="0 0 14 14"><path d="M12.6 1.2 V12.6 H1.2Z" fill="#b8b8b8"/></svg>
<div class="ab" style="left:0px;top:226px;width:25px;height:491px;background:#e6e6e6"></div>
<div class="ab" style="left:25px;top:207px;width:1px;height:510px;background:#bdbdbd"></div>
<div class="ab" style="left:0px;top:226px;width:25px;height:18px;background:#d2d2d2"></div>
<div class="ab" style="left:0px;top:244px;width:25px;height:1px;background:#bdbdbd"></div>
<div class="t" style="left:-487.5px;width:1000px;text-align:center;top:229.67px;font-size:12.2px;color:#555;font-weight:400;">1</div>
<div class="ab" style="left:0px;top:283px;width:25px;height:1px;background:#bdbdbd"></div>
<div class="t" style="left:-487.5px;width:1000px;text-align:center;top:268.67px;font-size:12.2px;color:#222;font-weight:400;">2</div>
<div class="ab" style="left:0px;top:323px;width:25px;height:1px;background:#bdbdbd"></div>
<div class="t" style="left:-487.5px;width:1000px;text-align:center;top:308.67px;font-size:12.2px;color:#222;font-weight:400;">3</div>
<div class="ab" style="left:0px;top:343px;width:25px;height:1px;background:#bdbdbd"></div>
<div class="t" style="left:-487.5px;width:1000px;text-align:center;top:328.67px;font-size:12.2px;color:#222;font-weight:400;">4</div>
<div class="ab" style="left:0px;top:383px;width:25px;height:1px;background:#bdbdbd"></div>
<div class="t" style="left:-487.5px;width:1000px;text-align:center;top:368.67px;font-size:12.2px;color:#222;font-weight:400;">5</div>
<div class="ab" style="left:0px;top:403px;width:25px;height:1px;background:#bdbdbd"></div>
<div class="t" style="left:-487.5px;width:1000px;text-align:center;top:388.67px;font-size:12.2px;color:#222;font-weight:400;">6</div>
<div class="ab" style="left:0px;top:423px;width:25px;height:1px;background:#bdbdbd"></div>
<div class="t" style="left:-487.5px;width:1000px;text-align:center;top:408.67px;font-size:12.2px;color:#222;font-weight:400;">7</div>
<div class="ab" style="left:0px;top:443px;width:25px;height:1px;background:#bdbdbd"></div>
<div class="t" style="left:-487.5px;width:1000px;text-align:center;top:428.67px;font-size:12.2px;color:#222;font-weight:400;">8</div>
<div class="ab" style="left:0px;top:463px;width:25px;height:1px;background:#bdbdbd"></div>
<div class="t" style="left:-487.5px;width:1000px;text-align:center;top:448.67px;font-size:12.2px;color:#222;font-weight:400;">9</div>
<div class="ab" style="left:0px;top:483px;width:25px;height:1px;background:#bdbdbd"></div>
<div class="t" style="left:-487.5px;width:1000px;text-align:center;top:468.67px;font-size:12.2px;color:#222;font-weight:400;">10</div>
<div class="ab" style="left:0px;top:503px;width:25px;height:1px;background:#bdbdbd"></div>
<div class="t" style="left:-487.5px;width:1000px;text-align:center;top:488.67px;font-size:12.2px;color:#222;font-weight:400;">11</div>
<div class="ab" style="left:0px;top:523px;width:25px;height:1px;background:#bdbdbd"></div>
<div class="t" style="left:-487.5px;width:1000px;text-align:center;top:508.67px;font-size:12.2px;color:#222;font-weight:400;">12</div>
<div class="ab" style="left:0px;top:543px;width:25px;height:1px;background:#bdbdbd"></div>
<div class="t" style="left:-487.5px;width:1000px;text-align:center;top:528.67px;font-size:12.2px;color:#222;font-weight:400;">13</div>
<div class="ab" style="left:0px;top:563px;width:25px;height:1px;background:#bdbdbd"></div>
<div class="t" style="left:-487.5px;width:1000px;text-align:center;top:548.67px;font-size:12.2px;color:#222;font-weight:400;">14</div>
<div class="ab" style="left:0px;top:583px;width:25px;height:1px;background:#bdbdbd"></div>
<div class="t" style="left:-487.5px;width:1000px;text-align:center;top:568.67px;font-size:12.2px;color:#222;font-weight:400;">15</div>
<div class="ab" style="left:0px;top:603px;width:25px;height:1px;background:#bdbdbd"></div>
<div class="t" style="left:-487.5px;width:1000px;text-align:center;top:588.67px;font-size:12.2px;color:#222;font-weight:400;">16</div>
<div class="ab" style="left:0px;top:623px;width:25px;height:1px;background:#bdbdbd"></div>
<div class="t" style="left:-487.5px;width:1000px;text-align:center;top:608.67px;font-size:12.2px;color:#222;font-weight:400;">17</div>
<div class="ab" style="left:0px;top:643px;width:25px;height:1px;background:#bdbdbd"></div>
<div class="t" style="left:-487.5px;width:1000px;text-align:center;top:628.67px;font-size:12.2px;color:#222;font-weight:400;">18</div>
<div class="ab" style="left:0px;top:663px;width:25px;height:1px;background:#bdbdbd"></div>
<div class="t" style="left:-487.5px;width:1000px;text-align:center;top:648.67px;font-size:12.2px;color:#222;font-weight:400;">19</div>
<div class="ab" style="left:0px;top:683px;width:25px;height:1px;background:#bdbdbd"></div>
<div class="t" style="left:-487.5px;width:1000px;text-align:center;top:668.67px;font-size:12.2px;color:#222;font-weight:400;">20</div>
<div class="ab" style="left:0px;top:703px;width:25px;height:1px;background:#bdbdbd"></div>
<div class="t" style="left:-487.5px;width:1000px;text-align:center;top:688.67px;font-size:12.2px;color:#222;font-weight:400;">21</div>
<div class="ab" style="left:0px;top:723px;width:25px;height:1px;background:#bdbdbd"></div>
<div class="t" style="left:-487.5px;width:1000px;text-align:center;top:708.67px;font-size:12.2px;color:#222;font-weight:400;">22</div>
<div class="ab" style="left:26px;top:226px;width:1319px;height:491px;background:#fff"></div>
<div class="ab" style="left:33px;top:226px;width:1312px;height:57px;background:#009b55"></div>
<div class="ab" style="left:33px;top:283px;width:1312px;height:40px;background:#f2f2f2"></div>
<div class="ab" style="left:153px;top:260px;width:128px;height:23px;background:#f2f2f2"></div>
<div class="ab" style="left:277px;top:298px;width:126px;height:25px;background:#fff"></div>
<div class="t" style="left:1290.00px;top:233.03px;font-size:10.6px;color:#fff;font-weight:400;transform:scaleX(1.0103);transform-origin:0 0;">versão 6.0</div>
<div class="t" style="left:-283.7px;width:1000px;text-align:center;top:267.86px;font-size:12.8px;color:#222;font-weight:700;transform:scaleX(0.9237);transform-origin:50% 0;">CADASTRO</div>
<div class="t" style="left:-156.60000000000002px;width:1000px;text-align:center;top:267.86px;font-size:12.8px;color:#f4fff8;font-weight:700;transform:scaleX(0.9346);transform-origin:50% 0;">DANFE</div>
<div class="t" style="left:-29.600000000000023px;width:1000px;text-align:center;top:267.86px;font-size:12.8px;color:#f4fff8;font-weight:700;transform:scaleX(0.9434);transform-origin:50% 0;">AJUDA</div>
<div class="t" style="left:-283.3px;width:1000px;text-align:center;top:307.86px;font-size:12.8px;color:#222;font-weight:700;transform:scaleX(0.8816);transform-origin:50% 0;">CLIENTES</div>
<div class="t" style="left:-158.14999999999998px;width:1000px;text-align:center;top:307.86px;font-size:12.8px;color:#222;font-weight:700;transform:scaleX(0.9529);transform-origin:50% 0;">PRODUTOS</div>
<div class="t" style="left:-30.649999999999977px;width:1000px;text-align:center;top:307.86px;font-size:12.8px;color:#222;font-weight:700;transform:scaleX(0.9496);transform-origin:50% 0;">TRANSPORTADORA</div>
<div class="t" style="left:93.5px;width:1000px;text-align:center;top:307.86px;font-size:12.8px;color:#222;font-weight:700;transform:scaleX(0.8999);transform-origin:50% 0;">CFOP</div>
<div class="t" style="left:222px;width:1000px;text-align:center;top:307.86px;font-size:12.8px;color:#222;font-weight:700;transform:scaleX(0.9827);transform-origin:50% 0;">MEDIDAS</div>
<svg style="left:33px;top:232px;" width="120" height="45" viewBox="0 0 120 45"><g fill="none" stroke="#e8fff2" stroke-width="1.2"><path d="M8.6 9.6 L11.2 11.2 Q13 7.6 18 7.6 Q23 7.6 24.8 11.2 L27.4 9.6 Q26 12.4 26.6 15 Q27.6 22 22.6 27.6 Q20.4 31.4 18 31.4 Q15.6 31.4 13.4 27.6 Q8.4 22 9.4 15 Q10 12.4 8.6 9.6Z"/><circle cx="14.2" cy="15.8" r="2.6"/><circle cx="21.6" cy="15.8" r="2.6"/><path d="M15.5 28 L18 25 L20.5 28"/></g><rect x="3" y="25.3" width="30" height="1.4" fill="#e8fff2"/><rect x="91.5" y="37" width="18" height="1.6" fill="#e8fff2"/></svg>
<div class="t" style="left:68.6px;top:240.6px;font-size:23.6px;color:#e8fff2;font-weight:400;transform:matrix(0.894,0,-0.14,1,0,0);transform-origin:0 100%">VIZUAL</div>
<div class="t" style="left:34.80px;top:265.91px;font-size:7.2px;color:#e8fff2;font-weight:700;transform:scaleX(0.8734);transform-origin:0 0;">PLANILHAS EMPRESARIAIS</div>
<svg style="left:205px;top:232px;" width="30" height="26" viewBox="0 0 30 26"><path d="M5.2 22.4 L6.3 18.2 L21.6 3.2 Q23 2 24.6 3.4 Q25.8 4.8 24.6 6.3 L9.4 21.4 Z" fill="#f0fff6"/><path d="M19.8 5 L23 8.2" stroke="#1a6b45" stroke-width="0.9"/><circle cx="7.7" cy="20" r="0.9" fill="#1a6b45"/></svg>
<svg style="left:334px;top:237px;" width="22" height="20" viewBox="0 0 22 20"><path d="M16 2.8 H18.5 V18.3 H16" fill="none" stroke="#f0fff6" stroke-width="1.4"/><rect x="1.7" y="1.7" width="14" height="16.6" fill="none" stroke="#f0fff6" stroke-width="1.5"/><rect x="4" y="4.1" width="10" height="1.2" fill="#d8ffe8"/><rect x="4" y="6.6" width="4" height="3" fill="#f0fff6"/><rect x="9" y="6.8" width="5" height="1.1" fill="#c8f5dc"/><rect x="9" y="8.6" width="5" height="1.1" fill="#a8e5c4"/><rect x="4" y="10.8" width="10" height="1.1" fill="#a8e5c4"/><rect x="4" y="13.2" width="4" height="1.1" fill="#c8f5dc"/><rect x="4" y="15.0" width="4" height="1.1" fill="#c8f5dc"/><rect x="9" y="13.1" width="5" height="3" fill="#e0fff0"/></svg>
<svg style="left:458px;top:232px;" width="24" height="26" viewBox="0 0 24 26"><g fill="#f0fff6"><rect x="10" y="2" width="11.6" height="9" /><path d="M11.5 10.5 L12.4 13 L14.5 10.5Z"/><circle cx="7.3" cy="12.5" r="2.4"/><path d="M2 20.7 Q2 16.2 7.3 16.2 Q10.6 16.2 10.6 18.8 V20.7Z"/><circle cx="13.6" cy="16.5" r="2.5"/><path d="M8.9 25 Q8.9 20.4 13.8 20.4 Q19 20.4 19 25Z"/></g><path d="M14.3 5 Q14.5 3.6 15.9 3.6 Q17.3 3.6 17.3 4.9 Q17.3 6 16 6.5 V7.8" fill="none" stroke="#3a5a4a" stroke-width="0.8"/><circle cx="16" cy="9.2" r="0.5" fill="#3a5a4a"/></svg>
<div class="ab" style="left:33px;top:343px;width:722px;height:39px;background:#a6a6a6"></div>
<div class="ab" style="left:115px;top:343px;width:1px;height:40px;background:#fff"></div>
<div class="ab" style="left:539px;top:343px;width:1px;height:40px;background:#fff"></div>
<div class="ab" style="left:672px;top:343px;width:1px;height:40px;background:#fff"></div>
<div class="t" style="left:-425.3px;width:1000px;text-align:center;top:358.96px;font-size:12.8px;color:#fff;font-weight:700;transform:scaleX(0.9631);transform-origin:50% 0;">CÓDIGO</div>
<div class="ab" style="left:99px;top:366px;width:15px;height:15px;background:#f4f4f4;border:1px solid #e0e0e0"></div>
<svg style="left:102.5px;top:371px;" width="8" height="5" viewBox="0 0 8 5"><path d="M0 0H8L4 4.5Z" fill="#555"/></svg>
<div class="t" style="left:-172.8px;width:1000px;text-align:center;top:358.96px;font-size:12.8px;color:#fff;font-weight:700;transform:scaleX(0.8957);transform-origin:50% 0;">DESCRIÇÃO</div>
<div class="ab" style="left:523px;top:366px;width:15px;height:15px;background:#f4f4f4;border:1px solid #e0e0e0"></div>
<svg style="left:526.5px;top:371px;" width="8" height="5" viewBox="0 0 8 5"><path d="M0 0H8L4 4.5Z" fill="#555"/></svg>
<div class="t" style="left:106px;width:1000px;text-align:center;top:358.96px;font-size:12.8px;color:#fff;font-weight:700;transform:scaleX(0.8921);transform-origin:50% 0;">REFFERÊNCIA</div>
<div class="ab" style="left:656px;top:366px;width:15px;height:15px;background:#f4f4f4;border:1px solid #e0e0e0"></div>
<svg style="left:659.5px;top:371px;" width="8" height="5" viewBox="0 0 8 5"><path d="M0 0H8L4 4.5Z" fill="#555"/></svg>
<div class="t" style="left:213.35000000000002px;width:1000px;text-align:center;top:358.96px;font-size:12.8px;color:#fff;font-weight:700;transform:scaleX(1.0293);transform-origin:50% 0;">NCM</div>
<div class="ab" style="left:739px;top:366px;width:15px;height:15px;background:#f4f4f4;border:1px solid #e0e0e0"></div>
<svg style="left:742.5px;top:371px;" width="8" height="5" viewBox="0 0 8 5"><path d="M0 0H8L4 4.5Z" fill="#555"/></svg>
<div class="ab" style="left:26px;top:382px;width:1319px;height:1px;background:#fff"></div>
<div class="ab" style="left:0px;top:383px;width:1345px;height:1px;background:#a0a0a0"></div>
<div class="ab" style="left:33px;top:384px;width:722px;height:19px;background:#d9d9d9"></div>
<div class="ab" style="left:115px;top:384px;width:1px;height:20px;background:#fff"></div>
<div class="ab" style="left:539px;top:384px;width:1px;height:20px;background:#fff"></div>
<div class="ab" style="left:672px;top:384px;width:1px;height:20px;background:#fff"></div>
<div class="t" style="left:-425.5px;width:1000px;text-align:center;top:388.97px;font-size:12.2px;color:#000;font-weight:400;">1</div>
<div class="t" style="left:-171.7px;width:1000px;text-align:center;top:388.97px;font-size:12.2px;color:#000;font-weight:400;transform:scaleX(0.9901);transform-origin:50% 0;">RESERVATORIO DE EXPANSAO</div>
<div class="t" style="left:106px;width:1000px;text-align:center;top:388.97px;font-size:12.2px;color:#000;font-weight:400;transform:scaleX(1.0077);transform-origin:50% 0;">G-1001</div>
<div class="t" style="left:214px;width:1000px;text-align:center;top:388.97px;font-size:12.2px;color:#000;font-weight:400;transform:scaleX(1.0318);transform-origin:50% 0;">8708.91.00</div>
<div class="ab" style="left:33px;top:404px;width:722px;height:19px;background:#ededed"></div>
<div class="ab" style="left:115px;top:404px;width:1px;height:20px;background:#fff"></div>
<div class="ab" style="left:539px;top:404px;width:1px;height:20px;background:#fff"></div>
<div class="ab" style="left:672px;top:404px;width:1px;height:20px;background:#fff"></div>
<div class="t" style="left:-425.5px;width:1000px;text-align:center;top:408.97px;font-size:12.2px;color:#000;font-weight:400;">2</div>
<div class="t" style="left:-171.7px;width:1000px;text-align:center;top:408.97px;font-size:12.2px;color:#000;font-weight:400;transform:scaleX(0.9901);transform-origin:50% 0;">RESERVATORIO DE EXPANSAO</div>
<div class="t" style="left:106px;width:1000px;text-align:center;top:408.97px;font-size:12.2px;color:#000;font-weight:400;transform:scaleX(1.0077);transform-origin:50% 0;">G-1002</div>
<div class="t" style="left:214px;width:1000px;text-align:center;top:408.97px;font-size:12.2px;color:#000;font-weight:400;transform:scaleX(1.0318);transform-origin:50% 0;">8708.91.00</div>
<div class="ab" style="left:33px;top:424px;width:722px;height:19px;background:#d9d9d9"></div>
<div class="ab" style="left:115px;top:424px;width:1px;height:20px;background:#fff"></div>
<div class="ab" style="left:539px;top:424px;width:1px;height:20px;background:#fff"></div>
<div class="ab" style="left:672px;top:424px;width:1px;height:20px;background:#fff"></div>
<div class="t" style="left:-425.5px;width:1000px;text-align:center;top:428.97px;font-size:12.2px;color:#000;font-weight:400;">3</div>
<div class="t" style="left:-173.3px;width:1000px;text-align:center;top:428.97px;font-size:12.2px;color:#000;font-weight:400;transform:scaleX(0.9942);transform-origin:50% 0;">RESERVATORIO DE LIMPADOR DE PARA BRISA</div>
<div class="t" style="left:106px;width:1000px;text-align:center;top:428.97px;font-size:12.2px;color:#000;font-weight:400;transform:scaleX(1.0077);transform-origin:50% 0;">G-1004</div>
<div class="t" style="left:214px;width:1000px;text-align:center;top:428.97px;font-size:12.2px;color:#000;font-weight:400;transform:scaleX(1.0318);transform-origin:50% 0;">8708.99.90</div>
<div class="ab" style="left:33px;top:444px;width:722px;height:19px;background:#ededed"></div>
<div class="ab" style="left:115px;top:444px;width:1px;height:20px;background:#fff"></div>
<div class="ab" style="left:539px;top:444px;width:1px;height:20px;background:#fff"></div>
<div class="ab" style="left:672px;top:444px;width:1px;height:20px;background:#fff"></div>
<div class="t" style="left:-425.5px;width:1000px;text-align:center;top:448.97px;font-size:12.2px;color:#000;font-weight:400;">4</div>
<div class="t" style="left:-172px;width:1000px;text-align:center;top:448.97px;font-size:12.2px;color:#000;font-weight:400;transform:scaleX(1.0023);transform-origin:50% 0;">RESERVATORIO DE PARTIDA A FRIO</div>
<div class="t" style="left:106px;width:1000px;text-align:center;top:448.97px;font-size:12.2px;color:#000;font-weight:400;transform:scaleX(1.0077);transform-origin:50% 0;">G-1005</div>
<div class="t" style="left:214px;width:1000px;text-align:center;top:448.97px;font-size:12.2px;color:#000;font-weight:400;transform:scaleX(1.0318);transform-origin:50% 0;">8708.99.90</div>
<div class="ab" style="left:33px;top:464px;width:722px;height:19px;background:#d9d9d9"></div>
<div class="ab" style="left:115px;top:464px;width:1px;height:20px;background:#fff"></div>
<div class="ab" style="left:539px;top:464px;width:1px;height:20px;background:#fff"></div>
<div class="ab" style="left:672px;top:464px;width:1px;height:20px;background:#fff"></div>
<div class="t" style="left:-425.5px;width:1000px;text-align:center;top:468.97px;font-size:12.2px;color:#000;font-weight:400;">5</div>
<div class="t" style="left:-171.7px;width:1000px;text-align:center;top:468.97px;font-size:12.2px;color:#000;font-weight:400;transform:scaleX(0.9901);transform-origin:50% 0;">RESERVATORIO DE EXPANSAO</div>
<div class="t" style="left:106px;width:1000px;text-align:center;top:468.97px;font-size:12.2px;color:#000;font-weight:400;transform:scaleX(1.0077);transform-origin:50% 0;">G-1006</div>
<div class="t" style="left:214px;width:1000px;text-align:center;top:468.97px;font-size:12.2px;color:#000;font-weight:400;transform:scaleX(1.0318);transform-origin:50% 0;">8708.91.00</div>
<div class="ab" style="left:33px;top:484px;width:722px;height:19px;background:#ededed"></div>
<div class="ab" style="left:115px;top:484px;width:1px;height:20px;background:#fff"></div>
<div class="ab" style="left:539px;top:484px;width:1px;height:20px;background:#fff"></div>
<div class="ab" style="left:672px;top:484px;width:1px;height:20px;background:#fff"></div>
<div class="t" style="left:-425.5px;width:1000px;text-align:center;top:488.97px;font-size:12.2px;color:#000;font-weight:400;">6</div>
<div class="t" style="left:-172px;width:1000px;text-align:center;top:488.97px;font-size:12.2px;color:#000;font-weight:400;transform:scaleX(1.0023);transform-origin:50% 0;">RESERVATORIO DE PARTIDA A FRIO</div>
<div class="t" style="left:106px;width:1000px;text-align:center;top:488.97px;font-size:12.2px;color:#000;font-weight:400;transform:scaleX(1.0077);transform-origin:50% 0;">G-1007</div>
<div class="t" style="left:214px;width:1000px;text-align:center;top:488.97px;font-size:12.2px;color:#000;font-weight:400;transform:scaleX(1.0318);transform-origin:50% 0;">8708.99.90</div>
<div class="ab" style="left:33px;top:504px;width:722px;height:19px;background:#d9d9d9"></div>
<div class="ab" style="left:115px;top:504px;width:1px;height:20px;background:#fff"></div>
<div class="ab" style="left:539px;top:504px;width:1px;height:20px;background:#fff"></div>
<div class="ab" style="left:672px;top:504px;width:1px;height:20px;background:#fff"></div>
<div class="t" style="left:-425.5px;width:1000px;text-align:center;top:508.97px;font-size:12.2px;color:#000;font-weight:400;">7</div>
<div class="t" style="left:-172px;width:1000px;text-align:center;top:508.97px;font-size:12.2px;color:#000;font-weight:400;transform:scaleX(1.0023);transform-origin:50% 0;">RESERVATORIO DE PARTIDA A FRIO</div>
<div class="t" style="left:106px;width:1000px;text-align:center;top:508.97px;font-size:12.2px;color:#000;font-weight:400;transform:scaleX(1.0077);transform-origin:50% 0;">G-1008</div>
<div class="t" style="left:214px;width:1000px;text-align:center;top:508.97px;font-size:12.2px;color:#000;font-weight:400;transform:scaleX(1.0318);transform-origin:50% 0;">8708.99.90</div>
<div class="ab" style="left:33px;top:524px;width:722px;height:19px;background:#ededed"></div>
<div class="ab" style="left:115px;top:524px;width:1px;height:20px;background:#fff"></div>
<div class="ab" style="left:539px;top:524px;width:1px;height:20px;background:#fff"></div>
<div class="ab" style="left:672px;top:524px;width:1px;height:20px;background:#fff"></div>
<div class="t" style="left:-425.5px;width:1000px;text-align:center;top:528.97px;font-size:12.2px;color:#000;font-weight:400;">8</div>
<div class="t" style="left:-173.3px;width:1000px;text-align:center;top:528.97px;font-size:12.2px;color:#000;font-weight:400;transform:scaleX(0.9942);transform-origin:50% 0;">RESERVATORIO DE LIMPADOR DE PARA BRISA</div>
<div class="t" style="left:106px;width:1000px;text-align:center;top:528.97px;font-size:12.2px;color:#000;font-weight:400;transform:scaleX(1.0077);transform-origin:50% 0;">G-1009</div>
<div class="t" style="left:214px;width:1000px;text-align:center;top:528.97px;font-size:12.2px;color:#000;font-weight:400;transform:scaleX(1.0318);transform-origin:50% 0;">8708.99.90</div>
<div class="ab" style="left:33px;top:544px;width:722px;height:19px;background:#d9d9d9"></div>
<div class="ab" style="left:115px;top:544px;width:1px;height:20px;background:#fff"></div>
<div class="ab" style="left:539px;top:544px;width:1px;height:20px;background:#fff"></div>
<div class="ab" style="left:672px;top:544px;width:1px;height:20px;background:#fff"></div>
<div class="t" style="left:-425.5px;width:1000px;text-align:center;top:548.97px;font-size:12.2px;color:#000;font-weight:400;">9</div>
<div class="t" style="left:-173.3px;width:1000px;text-align:center;top:548.97px;font-size:12.2px;color:#000;font-weight:400;transform:scaleX(0.9942);transform-origin:50% 0;">RESERVATORIO DE LIMPADOR DE PARA BRISA</div>
<div class="t" style="left:106px;width:1000px;text-align:center;top:548.97px;font-size:12.2px;color:#000;font-weight:400;transform:scaleX(1.0077);transform-origin:50% 0;">G-1010</div>
<div class="t" style="left:214px;width:1000px;text-align:center;top:548.97px;font-size:12.2px;color:#000;font-weight:400;transform:scaleX(1.0318);transform-origin:50% 0;">8708.99.90</div>
<div class="ab" style="left:33px;top:564px;width:722px;height:19px;background:#ededed"></div>
<div class="ab" style="left:115px;top:564px;width:1px;height:20px;background:#fff"></div>
<div class="ab" style="left:539px;top:564px;width:1px;height:20px;background:#fff"></div>
<div class="ab" style="left:672px;top:564px;width:1px;height:20px;background:#fff"></div>
<div class="t" style="left:-425.5px;width:1000px;text-align:center;top:568.97px;font-size:12.2px;color:#000;font-weight:400;">10</div>
<div class="t" style="left:-171.7px;width:1000px;text-align:center;top:568.97px;font-size:12.2px;color:#000;font-weight:400;transform:scaleX(0.9901);transform-origin:50% 0;">RESERVATORIO DE EXPANSAO</div>
<div class="t" style="left:106px;width:1000px;text-align:center;top:568.97px;font-size:12.2px;color:#000;font-weight:400;transform:scaleX(1.0306);transform-origin:50% 0;">G-1011</div>
<div class="t" style="left:214px;width:1000px;text-align:center;top:568.97px;font-size:12.2px;color:#000;font-weight:400;transform:scaleX(1.0318);transform-origin:50% 0;">8708.91.00</div>
<div class="ab" style="left:33px;top:584px;width:722px;height:19px;background:#d9d9d9"></div>
<div class="ab" style="left:115px;top:584px;width:1px;height:20px;background:#fff"></div>
<div class="ab" style="left:539px;top:584px;width:1px;height:20px;background:#fff"></div>
<div class="ab" style="left:672px;top:584px;width:1px;height:20px;background:#fff"></div>
<div class="t" style="left:-425.5px;width:1000px;text-align:center;top:588.97px;font-size:12.2px;color:#000;font-weight:400;">11</div>
<div class="t" style="left:-171.89999999999998px;width:1000px;text-align:center;top:588.97px;font-size:12.2px;color:#000;font-weight:400;transform:scaleX(0.9922);transform-origin:50% 0;">RESERVATORIO DE COMPENSACAO</div>
<div class="t" style="left:106px;width:1000px;text-align:center;top:588.97px;font-size:12.2px;color:#000;font-weight:400;transform:scaleX(1.0077);transform-origin:50% 0;">G-1012</div>
<div class="t" style="left:214px;width:1000px;text-align:center;top:588.97px;font-size:12.2px;color:#000;font-weight:400;transform:scaleX(1.0318);transform-origin:50% 0;">8708.91.00</div>
<div class="ab" style="left:33px;top:604px;width:722px;height:19px;background:#ededed"></div>
<div class="ab" style="left:115px;top:604px;width:1px;height:20px;background:#fff"></div>
<div class="ab" style="left:539px;top:604px;width:1px;height:20px;background:#fff"></div>
<div class="ab" style="left:672px;top:604px;width:1px;height:20px;background:#fff"></div>
<div class="t" style="left:-425.5px;width:1000px;text-align:center;top:608.97px;font-size:12.2px;color:#000;font-weight:400;">12</div>
<div class="t" style="left:-171.89999999999998px;width:1000px;text-align:center;top:608.97px;font-size:12.2px;color:#000;font-weight:400;transform:scaleX(0.9922);transform-origin:50% 0;">RESERVATORIO DE COMPENSACAO</div>
<div class="t" style="left:106px;width:1000px;text-align:center;top:608.97px;font-size:12.2px;color:#000;font-weight:400;transform:scaleX(1.0077);transform-origin:50% 0;">G-1013</div>
<div class="t" style="left:214px;width:1000px;text-align:center;top:608.97px;font-size:12.2px;color:#000;font-weight:400;transform:scaleX(1.0318);transform-origin:50% 0;">8708.91.00</div>
<div class="ab" style="left:33px;top:624px;width:722px;height:19px;background:#d9d9d9"></div>
<div class="ab" style="left:115px;top:624px;width:1px;height:20px;background:#fff"></div>
<div class="ab" style="left:539px;top:624px;width:1px;height:20px;background:#fff"></div>
<div class="ab" style="left:672px;top:624px;width:1px;height:20px;background:#fff"></div>
<div class="t" style="left:-425.5px;width:1000px;text-align:center;top:628.97px;font-size:12.2px;color:#000;font-weight:400;">13</div>
<div class="t" style="left:-171.89999999999998px;width:1000px;text-align:center;top:628.97px;font-size:12.2px;color:#000;font-weight:400;transform:scaleX(0.9922);transform-origin:50% 0;">RESERVATORIO DE COMPENSACAO</div>
<div class="t" style="left:106px;width:1000px;text-align:center;top:628.97px;font-size:12.2px;color:#000;font-weight:400;transform:scaleX(1.0077);transform-origin:50% 0;">G-1014</div>
<div class="t" style="left:214px;width:1000px;text-align:center;top:628.97px;font-size:12.2px;color:#000;font-weight:400;transform:scaleX(1.0318);transform-origin:50% 0;">8708.91.00</div>
<div class="ab" style="left:33px;top:644px;width:722px;height:19px;background:#ededed"></div>
<div class="ab" style="left:115px;top:644px;width:1px;height:20px;background:#fff"></div>
<div class="ab" style="left:539px;top:644px;width:1px;height:20px;background:#fff"></div>
<div class="ab" style="left:672px;top:644px;width:1px;height:20px;background:#fff"></div>
<div class="t" style="left:-425.5px;width:1000px;text-align:center;top:648.97px;font-size:12.2px;color:#000;font-weight:400;">14</div>
<div class="t" style="left:-173.3px;width:1000px;text-align:center;top:648.97px;font-size:12.2px;color:#000;font-weight:400;transform:scaleX(0.9942);transform-origin:50% 0;">RESERVATORIO DE LIMPADOR DE PARA BRISA</div>
<div class="t" style="left:106px;width:1000px;text-align:center;top:648.97px;font-size:12.2px;color:#000;font-weight:400;transform:scaleX(1.0077);transform-origin:50% 0;">G-1015</div>
<div class="t" style="left:214px;width:1000px;text-align:center;top:648.97px;font-size:12.2px;color:#000;font-weight:400;transform:scaleX(1.0318);transform-origin:50% 0;">8708.99.90</div>
<div class="ab" style="left:33px;top:664px;width:722px;height:19px;background:#d9d9d9"></div>
<div class="ab" style="left:115px;top:664px;width:1px;height:20px;background:#fff"></div>
<div class="ab" style="left:539px;top:664px;width:1px;height:20px;background:#fff"></div>
<div class="ab" style="left:672px;top:664px;width:1px;height:20px;background:#fff"></div>
<div class="t" style="left:-425.5px;width:1000px;text-align:center;top:668.97px;font-size:12.2px;color:#000;font-weight:400;">15</div>
<div class="t" style="left:-173.3px;width:1000px;text-align:center;top:668.97px;font-size:12.2px;color:#000;font-weight:400;transform:scaleX(0.9942);transform-origin:50% 0;">RESERVATORIO DE LIMPADOR DE PARA BRISA</div>
<div class="t" style="left:106px;width:1000px;text-align:center;top:668.97px;font-size:12.2px;color:#000;font-weight:400;transform:scaleX(1.0077);transform-origin:50% 0;">G-1016</div>
<div class="t" style="left:214px;width:1000px;text-align:center;top:668.97px;font-size:12.2px;color:#000;font-weight:400;transform:scaleX(1.0318);transform-origin:50% 0;">8708.99.90</div>
<div class="ab" style="left:33px;top:684px;width:722px;height:19px;background:#ededed"></div>
<div class="ab" style="left:115px;top:684px;width:1px;height:20px;background:#fff"></div>
<div class="ab" style="left:539px;top:684px;width:1px;height:20px;background:#fff"></div>
<div class="ab" style="left:672px;top:684px;width:1px;height:20px;background:#fff"></div>
<div class="t" style="left:-425.5px;width:1000px;text-align:center;top:688.97px;font-size:12.2px;color:#000;font-weight:400;">16</div>
<div class="t" style="left:-173.3px;width:1000px;text-align:center;top:688.97px;font-size:12.2px;color:#000;font-weight:400;transform:scaleX(0.9942);transform-origin:50% 0;">RESERVATORIO DE LIMPADOR DE PARA BRISA</div>
<div class="t" style="left:106px;width:1000px;text-align:center;top:688.97px;font-size:12.2px;color:#000;font-weight:400;transform:scaleX(1.0077);transform-origin:50% 0;">G-1017</div>
<div class="t" style="left:214px;width:1000px;text-align:center;top:688.97px;font-size:12.2px;color:#000;font-weight:400;transform:scaleX(1.0318);transform-origin:50% 0;">8708.99.90</div>
<svg style="left:749px;top:698px;" width="6" height="6" viewBox="0 0 6 6"><path d="M5 0.6 V5 H0.6 Z" fill="#2f4f9a"/></svg>
<div class="ab" style="left:24px;top:225px;width:11px;height:20px;border:2px solid #217346"></div>
<div class="ab" style="left:30px;top:240px;width:6px;height:6px;background:#217346;border:1px solid #fff;border-right:none;border-bottom:none"></div>
<div class="ab" style="left:1344px;top:207px;width:1px;height:511px;background:#a0a0a0"></div>
<div class="ab" style="left:1345px;top:207px;width:21px;height:511px;background:#e6e6e6"></div>
<div class="ab" style="left:1348px;top:224px;width:15px;height:478px;background:#d9d9d9"></div>
<div class="ab" style="left:1348px;top:209px;width:15px;height:15px;background:#fff;border:1px solid #c6c6c6"></div>
<svg style="left:1351px;top:214px;" width="9" height="5" viewBox="0 0 9 5"><path d="M0 5H9L4.5 0Z" fill="#666"/></svg>
<div class="ab" style="left:1348px;top:224px;width:15px;height:448px;background:#fff;border:1px solid #c6c6c6"></div>
<div class="ab" style="left:1348px;top:702px;width:15px;height:15px;background:#fff;border:1px solid #c6c6c6"></div>
<svg style="left:1351px;top:707px;" width="9" height="5" viewBox="0 0 9 5"><path d="M0 0H9L4.5 5Z" fill="#666"/></svg>
<div class="ab" style="left:0px;top:717px;width:1366px;height:28px;background:#e6e6e6"></div>
<div class="ab" style="left:0px;top:717px;width:1345px;height:1px;background:#a0a0a0"></div>
<div class="ab" style="left:202px;top:717px;width:122px;height:25px;background:#fff;border-left:1px solid #a0a0a0;border-right:1px solid #a0a0a0"></div>
<div class="ab" style="left:202px;top:740px;width:121px;height:2px;background:#217346"></div>
<div class="ab" style="left:100px;top:722px;width:1px;height:19px;background:#a6a6a6"></div>
<div class="ab" style="left:496.6px;top:722px;width:1px;height:19px;background:#a6a6a6"></div>
<div class="ab" style="left:553.5px;top:722px;width:1px;height:19px;background:#a6a6a6"></div>
<div class="ab" style="left:636.7px;top:722px;width:1px;height:19px;background:#a6a6a6"></div>
<div class="ab" style="left:703.4px;top:722px;width:1px;height:19px;background:#a6a6a6"></div>
<div class="ab" style="left:777.5px;top:722px;width:1px;height:19px;background:#a6a6a6"></div>
<div class="ab" style="left:819.6px;top:722px;width:1px;height:19px;background:#a6a6a6"></div>
<div class="ab" style="left:891.6px;top:722px;width:1px;height:19px;background:#a6a6a6"></div>
<div class="ab" style="left:944.5px;top:722px;width:1px;height:19px;background:#a6a6a6"></div>
<div class="t" style="left:114.60px;top:724.96px;font-size:12.8px;color:#3a3a3a;font-weight:400;transform:scaleX(0.8855);transform-origin:0 0;">CADCLIENTE</div>
<div class="t" style="left:339.80px;top:724.96px;font-size:12.8px;color:#3a3a3a;font-weight:400;transform:scaleX(0.9262);transform-origin:0 0;">CADTRANSPORTADORA</div>
<div class="t" style="left:509.00px;top:724.96px;font-size:12.8px;color:#3a3a3a;font-weight:400;transform:scaleX(0.8437);transform-origin:0 0;">CFOP</div>
<div class="t" style="left:567.00px;top:724.96px;font-size:12.8px;color:#3a3a3a;font-weight:400;transform:scaleX(0.9260);transform-origin:0 0;">MEDIDAS</div>
<div class="t" style="left:649.00px;top:724.96px;font-size:12.8px;color:#3a3a3a;font-weight:400;transform:scaleX(0.8990);transform-origin:0 0;">DANFE</div>
<div class="t" style="left:716.50px;top:724.96px;font-size:12.8px;color:#3a3a3a;font-weight:400;transform:scaleX(0.9011);transform-origin:0 0;">DANFE2</div>
<div class="t" style="left:790.50px;top:724.96px;font-size:12.8px;color:#3a3a3a;font-weight:400;transform:scaleX(0.8864);transform-origin:0 0;">INI</div>
<div class="t" style="left:832.00px;top:724.96px;font-size:12.8px;color:#3a3a3a;font-weight:400;transform:scaleX(0.9241);transform-origin:0 0;">CONFIG</div>
<div class="t" style="left:904.00px;top:724.96px;font-size:12.8px;color:#3a3a3a;font-weight:400;transform:scaleX(1.0340);transform-origin:0 0;">MVA</div>
<div class="t" style="left:214.00px;top:724.96px;font-size:12.8px;color:#1e6e42;font-weight:700;transform:scaleX(0.9697);transform-origin:0 0;">CADPRODUTOS</div>
<svg style="left:24px;top:722px;" width="12" height="16" viewBox="0 0 12 16"><path d="M7.6 4.4 V11.6 L3.6 8Z" fill="#c6c6c6"/></svg>
<svg style="left:53px;top:722px;" width="12" height="16" viewBox="0 0 12 16"><path d="M4.4 4.4 V11.6 L8.4 8Z" fill="#c6c6c6"/></svg>
<svg style="left:976px;top:720px;" width="20" height="20" viewBox="0 0 20 20"><circle cx="10" cy="10" r="7.6" fill="none" stroke="#777" stroke-width="1.3"/><path d="M10 5.8 V14.2 M5.8 10 H14.2" stroke="#777" stroke-width="1.6"/></svg>
<div class="ab" style="left:1031px;top:725.5px;width:2px;height:2px;background:#b0b0b0;border-radius:1px"></div>
<div class="ab" style="left:1031px;top:729.5px;width:2px;height:2px;background:#b0b0b0;border-radius:1px"></div>
<div class="ab" style="left:1031px;top:733.5px;width:2px;height:2px;background:#b0b0b0;border-radius:1px"></div>
<div class="ab" style="left:1049px;top:724px;width:293px;height:15px;background:#dadada;border:1px solid #c6c6c6"></div>
<div class="ab" style="left:1049px;top:724px;width:15px;height:15px;background:#fff;border:1px solid #c6c6c6"></div>
<div class="ab" style="left:1064px;top:724px;width:142px;height:15px;background:#fff;border:1px solid #c6c6c6"></div>
<div class="ab" style="left:1327px;top:724px;width:15px;height:15px;background:#fff;border:1px solid #c6c6c6"></div>
<div class="ab" style="left:0px;top:745px;width:1366px;height:23px;background:#f3f2f1;border-top:1px solid #c4c4c4"></div>
<div class="ab" style="left:1066px;top:745px;width:40px;height:23px;background:#c8c8c8"></div>
<div class="t" style="left:1331.60px;top:752.28px;font-size:10.3px;color:#444;font-weight:400;">100%</div>
<div class="ab" style="left:1205px;top:756px;width:100px;height:1px;background:#999"></div>
<div class="ab" style="left:1253px;top:751px;width:5px;height:11px;background:#777"></div>
<svg style="left:1053px;top:727px;" width="8" height="10" viewBox="0 0 8 10"><path d="M6 1 V9 L1.6 5Z" fill="#666"/></svg>
<svg style="left:1331px;top:727px;" width="8" height="10" viewBox="0 0 8 10"><path d="M2 1 V9 L6.4 5Z" fill="#666"/></svg>
<svg style="left:6px;top:748px;" width="20" height="18" viewBox="0 0 20 18"><path d="M2.6 3.5 H15.4 M2.6 5.6 H15.4" stroke="#555" stroke-width="1"/><path d="M2.6 3 V14.6 H8.6" fill="none" stroke="#555" stroke-width="1"/><path d="M4.6 8.6 H8 M4.6 11 H8 M4.6 13.2 H7" stroke="#555" stroke-width="0.9"/><circle cx="13" cy="12" r="3.6" fill="#f3f2f1" stroke="#555" stroke-width="1"/><circle cx="13" cy="12" r="1.5" fill="#555"/></svg>
<svg style="left:1077px;top:747px;" width="18" height="18" viewBox="0 0 18 18"><rect x="2.5" y="2.5" width="12" height="12" fill="none" stroke="#333" stroke-width="1.1"/><path d="M2.5 6.5 H14.5 M2.5 10.5 H14.5 M6.5 2.5 V14.5 M10.5 2.5 V14.5" stroke="#333" stroke-width="1.1"/></svg>
<svg style="left:1117px;top:747px;" width="18" height="18" viewBox="0 0 18 18"><rect x="2.5" y="2.5" width="13" height="12" fill="none" stroke="#444" stroke-width="1.1"/><rect x="5.5" y="5" width="7" height="7" fill="none" stroke="#444" stroke-width="1"/><path d="M6.8 7 H11.2 M6.8 8.6 H11.2 M6.8 10.2 H11.2" stroke="#444" stroke-width="0.8"/></svg>
<svg style="left:1157px;top:747px;" width="18" height="18" viewBox="0 0 18 18"><path d="M2.5 2.5 H15.5 V14.5 H2.5Z M6.5 2.5 V9.5 H10.5 V2.5" fill="none" stroke="#444" stroke-width="1.1"/></svg>
<div class="ab" style="left:1191.5px;top:755px;width:8.5px;height:1.2px;background:#555"></div>
<div class="ab" style="left:1309.7px;top:755px;width:8.6px;height:1.2px;background:#555"></div>
<div class="ab" style="left:1313.4px;top:751px;width:1.2px;height:8.6px;background:#555"></div>
</body></html>
